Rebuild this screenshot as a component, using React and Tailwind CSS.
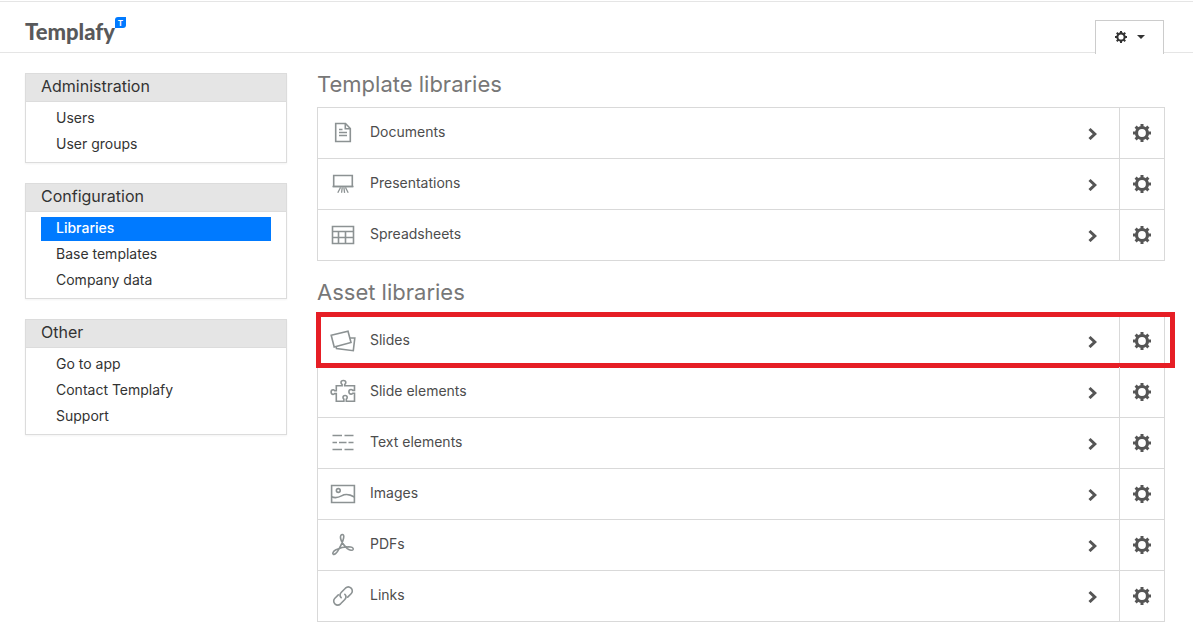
import React from 'react';

const menu = [
  { title: 'Administration', items: ['Users', 'User groups'] },
  { title: 'Configuration', items: ['Libraries', 'Base templates', 'Company data'] },
  { title: 'Other', items: ['Go to app', 'Contact Templafy', 'Support'] },
];

const Icon = ({ children }) => (
  <svg
    className="w-[26px] h-[26px] shrink-0"
    viewBox="0 0 26 26"
    fill="none"
    stroke="#8c9293"
    strokeWidth="1.6"
    aria-hidden="true"
  >
    {children}
  </svg>
);

const icons = {
  documents: (
    <Icon>
      <path d="M5.7 3.5H15.5L20.3 8.5V21.5H5.7Z" />
      <path d="M15.3 4V8.7H20M9 9.5H12.5M9 12.5H17M9 15.5H17" />
    </Icon>
  ),
  presentations: (
    <Icon>
      <path d="M3.7 4.5H22.3V15.5H3.7Z" />
      <path d="M2.5 15.5H23.5M10.5 16.5L7.8 21.8M12.2 16.5L11.6 21.8M13.9 16.5L14.6 21.8M15.5 16.5L18.2 21.8" strokeWidth="1.3" />
    </Icon>
  ),
  spreadsheets: (
    <Icon>
      <path d="M2.5 4.5H23.5V21.5H2.5Z" />
      <path d="M2.5 9.5H23.5M2.5 15.5H23.5M8.5 9.5V21.5M15.5 9.5V21.5" />
    </Icon>
  ),
  slides: (
    <Icon>
      <path d="M1.2 7.3L18 3.2L21 14.5L4.2 19Z" />
      <path d="M19.8 10H24.8L23.3 22.7L6.5 20.5L6.2 18.6" />
    </Icon>
  ),
  puzzle: (
    <Icon>
      <path d="M6.3 6.7H12.1V5.4C11.3 4.9 11 4.3 11 3.5C11 2.3 12 1.5 13.4 1.5S15.8 2.3 15.8 3.5C15.8 4.3 15.5 4.9 14.7 5.4V6.7H24.5V11.4H22.8C22.3 10.8 21.7 10.5 21 10.5C19.7 10.5 18.9 11.5 18.9 12.8S19.7 15.1 21 15.1C21.7 15.1 22.3 14.8 22.8 14.2H24.5V22.3H16.3V20.2C17 19.7 17.2 19.2 17.2 18.5C17.2 17.2 16.4 16.5 15.1 16.5S13 17.2 13 18.5C13 19.2 13.3 19.7 13.9 20.2V22.3H6.3V14.6H4.7C4.2 15.2 3.7 15.4 3.1 15.4C1.9 15.4 1.1 14.4 1.1 13.1S1.9 10.8 3.1 10.8C3.7 10.8 4.2 11.1 4.7 11.7H6.3Z" />
    </Icon>
  ),
  text: (
    <Icon>
      <path d="M2.5 5.5H12M14.5 5.5H23.5M2.5 12.5H7M9 12.5H16.5M18.5 12.5H23.5M2.5 19.5H12M14.5 19.5H23.5" />
    </Icon>
  ),
  images: (
    <Icon>
      <path d="M1.6 4.5H24.4V21.5H1.6Z" />
      <circle cx="8.3" cy="9.5" r="1.9" />
      <path d="M1.6 15.8C5.5 17.5 8.5 16.5 11.5 14.9C15 13 18 12.6 24.4 16" />
    </Icon>
  ),
  pdfs: (
    <Icon>
      <path d="M9 17C11.5 12.5 13 9 13.6 6C14.2 3.5 13.4 2.5 12.3 2.5S10.2 3.5 10.5 6C11.2 10 14 13.5 17.3 16.6C20 18.6 22.6 18.8 23.2 17.2C23.6 15.6 21.5 14.8 18.5 14.7C14 14.8 10 15.8 6 17.8C3 19.5 2.2 21.3 3.2 22.2C4.5 23 7 21 9 17Z" />
    </Icon>
  ),
  links: (
    <Icon>
      <path
        strokeLinecap="round"
        d="M11.2 14.7C9.6 13 9.8 10.9 11.4 9.3L15.4 5.2C17.1 3.6 19.5 3.6 21.1 5.1C22.7 6.7 22.7 9.2 21.1 10.8L17.7 14.1M14.8 11.3C16.4 13 16.2 15.1 14.6 16.7L10.6 20.8C8.9 22.4 6.5 22.4 4.9 20.9C3.3 19.3 3.3 16.8 4.9 15.2L8.3 11.9"
      />
    </Icon>
  ),
};

const sections = [
  {
    title: 'Template libraries',
    rows: [
      { name: 'Documents', icon: icons.documents },
      { name: 'Presentations', icon: icons.presentations },
      { name: 'Spreadsheets', icon: icons.spreadsheets },
    ],
  },
  {
    title: 'Asset libraries',
    rows: [
      { name: 'Slides', icon: icons.slides, marked: true },
      { name: 'Slide elements', icon: icons.puzzle },
      { name: 'Text elements', icon: icons.text },
      { name: 'Images', icon: icons.images },
      { name: 'PDFs', icon: icons.pdfs },
      { name: 'Links', icon: icons.links },
    ],
  },
];

const Gear = ({ className }) => (
  <svg className={className} viewBox="0 0 18 18" fill="none" stroke="currentColor" aria-hidden="true">
    <circle cx="9" cy="9" r="5.5" strokeWidth="3.2" />
    <path
      strokeWidth="3"
      d="M9 0V4M9 14V18M0 9H4M14 9H18M2.6 2.6L5.5 5.5M12.5 12.5L15.4 15.4M15.4 2.6L12.5 5.5M5.5 12.5L2.6 15.4"
    />
  </svg>
);

const Sidebar = () => (
  <nav className="w-[262px] shrink-0 flex flex-col gap-5">
    {menu.map((group) => (
      <section key={group.title} className="border border-[#dcdcdc] shadow-xs">
        <h2 className="h-7 px-[15px] border-b border-[#dcdcdc] bg-[#e5e5e5] text-base leading-6 text-[#333]">
          {group.title}
        </h2>
        <ul className="flex flex-col gap-0.5 px-[15px] py-[5px]">
          {group.items.map((item) => (
            <li key={item}>
              <a
                href="#"
                className={
                  item === 'Libraries'
                    ? 'block h-6 px-[15px] leading-[22px] bg-[#007aff] text-white font-medium'
                    : 'block h-6 px-[15px] leading-[22px] text-[#333]'
                }
              >
                {item}
              </a>
            </li>
          ))}
        </ul>
      </section>
    ))}
  </nav>
);

const LibraryRow = ({ row }) => (
  <li className="relative flex h-[51px] border-b border-[#d9d9d9]">
    <a href="#" className="flex flex-1 items-center pl-3 pr-[21px] text-[#4d4d4d]">
      {row.icon}
      <span className="flex-1 pl-[14px] pb-[3px]">{row.name}</span>
      <svg className="w-[10px] h-[14px]" viewBox="0 0 10 14" fill="none" stroke="#555" strokeWidth="3" aria-hidden="true">
        <path d="M1.5 3L6.8 8L1.5 13" />
      </svg>
    </a>
    <button
      type="button"
      aria-label={`${row.name} settings`}
      className="w-[45px] flex items-center justify-center border-l border-[#d9d9d9] pb-px text-[#555]"
    >
      <Gear className="w-[18px] h-[18px]" />
    </button>
    {row.marked && (
      <div className="absolute -top-1 -bottom-[2px] -left-[2px] -right-[11px] border-5 border-[#e61e25] pointer-events-none" />
    )}
  </li>
);

const App = () => {
  return (
    <div className="min-h-screen bg-white pt-px text-sm font-['Inter',sans-serif]">
      <header className="flex h-[52px] items-end justify-between border-y border-[#e5e5e5] pl-[25px] pr-[29px]">
        <a href="#" aria-label="Templafy" className="flex h-full items-start text-[#58595b]">
          <span className="pt-[14px] text-[22px] leading-8 font-black font-['Lato',sans-serif]">Templafy</span>
          <span className="mt-[15px] flex w-[11px] h-[11px] items-center justify-center rounded-tl-[3px] rounded-br-[3px] bg-[#007aff] text-[8px] leading-none font-bold text-white">
            T
          </span>
        </a>
        <button
          type="button"
          aria-label="Settings"
          className="-mb-0.5 flex h-[34px] w-[69px] items-center justify-center gap-[10px] border border-b-0 border-[#ccc] bg-white pb-0.5 text-[#333]"
        >
          <Gear className="w-3 h-3" />
          <svg className="w-2 h-1" viewBox="0 0 8 4" fill="currentColor" aria-hidden="true">
            <path d="M0 0H8L4 4Z" />
          </svg>
        </button>
      </header>
      <div className="flex gap-[30px] pt-5 pb-3 pl-[25px] pr-7">
        <Sidebar />
        <main className="flex-1">
          {sections.map((section) => (
            <section key={section.title} className="mb-5">
              <h1 className="mb-3 text-[22px] leading-[22px] text-[#777]">{section.title}</h1>
              <ul className="border-t border-x border-[#d9d9d9]">
                {section.rows.map((row) => (
                  <LibraryRow key={row.name} row={row} />
                ))}
              </ul>
            </section>
          ))}
        </main>
      </div>
    </div>
  );
};

export default App;
